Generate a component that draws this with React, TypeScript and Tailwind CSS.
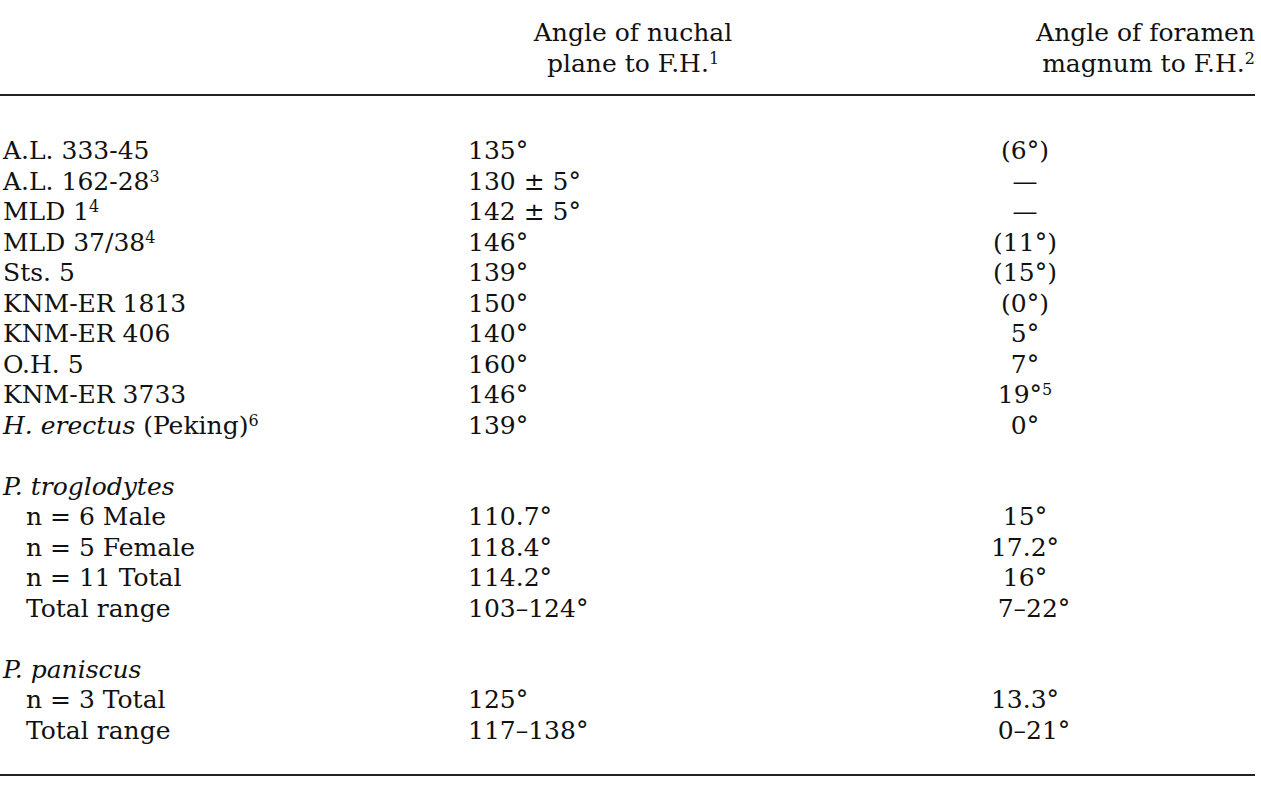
import type { ReactNode } from "react";

// preflight already lifts <sup> by half its own size
function Sup({ children }: { children: ReactNode }) {
  return <sup className="text-[16px]">{children}</sup>;
}

type RowData = { name: ReactNode; nuchal: ReactNode; foramen: ReactNode; cls?: string };

const rows: RowData[] = [
  { name: "A.L. 333-45", nuchal: "135°", foramen: "(6°)" },
  { name: <>A.L. 162-28<Sup>3</Sup></>, nuchal: "130 ± 5°", foramen: "—" },
  { name: <>MLD 1<Sup>4</Sup></>, nuchal: "142 ± 5°", foramen: "—" },
  { name: <>MLD 37/38<Sup>4</Sup></>, nuchal: "146°", foramen: "(11°)" },
  { name: "Sts. 5", nuchal: "139°", foramen: "(15°)" },
  { name: "KNM-ER 1813", nuchal: "150°", foramen: "(0°)" },
  { name: "KNM-ER 406", nuchal: "140°", foramen: "5°" },
  { name: "O.H. 5", nuchal: "160°", foramen: "7°" },
  { name: "KNM-ER 3733", nuchal: "146°", foramen: <>19°<Sup>5</Sup></> },
  { name: <><i>H. erectus</i> (Peking)<Sup>6</Sup></>, nuchal: "139°", foramen: "0°" },
];

const trog: RowData[] = [
  { name: "n = 6 Male", nuchal: "110.7°", foramen: "15°" },
  { name: "n = 5 Female", nuchal: "118.4°", foramen: "17.2°" },
  { name: "n = 11 Total", nuchal: "114.2°", foramen: "16°" },
  { name: "Total range", nuchal: "103–124°", foramen: "7–22°", cls: "pl-[18px]" },
];

const pan: RowData[] = [
  { name: "n = 3 Total", nuchal: "125°", foramen: "13.3°" },
  { name: "Total range", nuchal: "117–138°", foramen: "0–21°", cls: "pl-[18px]" },
];

function Row({ name, nuchal, foramen, cls, indent }: RowData & { indent?: boolean }) {
  return (
    <div className="grid grid-cols-[468px_330px_1fr] h-[30.5px] items-center whitespace-nowrap">
      <div className={indent ? "pl-[26px]" : "pl-[3px]"}>{name}</div>
      <div>{nuchal}</div>
      <div className="pl-[167px]">
        <div className={"w-[120px] text-center " + (cls ?? "")}>{foramen}</div>
      </div>
    </div>
  );
}

export default function App() {
  return (
    <div
      className="w-[1261px] h-[787px] bg-white text-[#111] text-[25px] leading-[30.5px] overflow-hidden"
      style={{ fontFamily: '"DejaVu Serif", serif' }}
    >
      <div className="pr-[6px] pt-[18px]">
        <div className="grid grid-cols-[468px_330px_1fr] pb-[15px] border-b-2 border-[#222]">
          <div />
          <div className="text-center">
            <div>Angle of nuchal</div>
            <div>
              plane to F.H.<Sup>1</Sup>
            </div>
          </div>
          <div className="text-right">
            <div>Angle of foramen</div>
            <div>
              magnum to F.H.<Sup>2</Sup>
            </div>
          </div>
        </div>

        <div className="pt-[40px] pb-[28px] border-b-2 border-[#222]">
          {rows.map((r, i) => (
            <Row key={i} {...r} />
          ))}
          <div className="h-[30.5px]" />
          <Row name={<i>P. troglodytes</i>} nuchal="" foramen="" />
          {trog.map((r, i) => (
            <Row key={i} {...r} indent />
          ))}
          <div className="h-[30.5px]" />
          <Row name={<i>P. paniscus</i>} nuchal="" foramen="" />
          {pan.map((r, i) => (
            <Row key={i} {...r} indent />
          ))}
        </div>
      </div>
    </div>
  );
}
